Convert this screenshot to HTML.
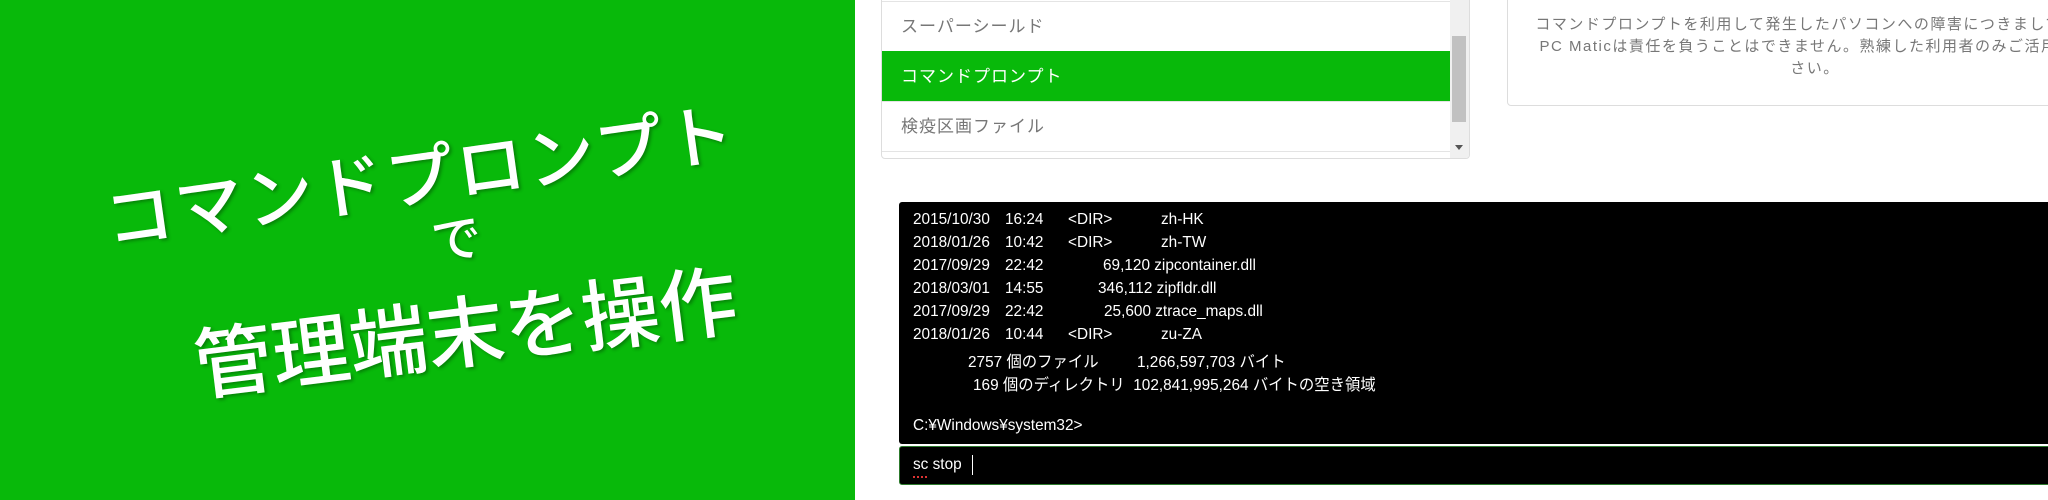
<!DOCTYPE html>
<html><head><meta charset="utf-8"><style>
*{margin:0;padding:0;box-sizing:border-box}
html,body{width:2048px;height:500px;overflow:hidden;background:#fff;position:relative;font-family:"Liberation Sans","Noto Sans CJK JP",sans-serif}
#green{position:absolute;left:0;top:0;width:855px;height:500px;background:#08b90a;overflow:hidden}
.t{position:absolute;color:#fff;font-family:"Noto Sans CJK JP",sans-serif;font-weight:500;white-space:nowrap;text-shadow:2px 2px 3px rgba(0,0,0,.3);transform:translate(-50%,-50%) rotate(-6deg);line-height:1}
#list{position:absolute;left:881px;top:-2px;width:589px;height:161px;border:1px solid #ddd;border-radius:0 0 4px 4px;overflow:hidden;background:#fff}
.row{position:absolute;left:0;width:570px;height:50px;border-top:1px solid #e4e4e4;font-size:17px;color:#777;padding-left:19px;line-height:50px;letter-spacing:1px}
#sb{position:absolute;right:0;top:0;width:19px;height:161px;background:#f0f0f0}
#thumb{position:absolute;left:2px;top:37px;width:14px;height:86px;background:#c1c1c1}
#note{position:absolute;left:1507px;top:-6px;width:600px;height:112px;border:1px solid #ddd;border-radius:4px;background:#fff}
.nl{position:absolute;left:1815px;transform:translateX(-50%);white-space:nowrap;font-size:15px;color:#777;letter-spacing:1.5px}
#term{position:absolute;left:899px;top:202px;width:1160px;height:242px;background:#000;border-radius:3px;overflow:hidden;color:#fff;font-size:16px}
.ln{position:absolute;left:0;height:23px;width:100%}
.ln span{position:absolute;top:0;transform:scaleX(.96);transform-origin:left;white-space:nowrap}
#prompt{position:absolute;left:899px;top:446px;width:1160px;height:39px;background:#000;border:1px solid #2d7a2d;border-radius:3px;color:#fff;font-size:16px}
</style></head><body>
<div id="green">
<div class="t" style="left:420px;top:172px;font-size:68px;letter-spacing:3px;transform:translate(-50%,-50%) rotate(-8deg)">コマンドプロンプト</div>
<div class="t" style="left:456px;top:236px;font-size:50px">で</div>
<div class="t" style="left:465px;top:328px;font-size:78px;letter-spacing:0px;transform:translate(-50%,-50%) rotate(-7deg)">管理端末を操作</div>
</div>

<div id="list">
<div class="row" style="top:2px">スーパーシールド</div>
<div class="row" style="top:52px;background:#08b90a;color:#fff;border-top-color:#08b90a">コマンドプロンプト</div>
<div class="row" style="top:102px">検疫区画ファイル</div>
<div class="row" style="top:152px"></div>
<div id="sb"><div id="thumb"></div><div style="position:absolute;left:5px;top:146px;width:0;height:0;border-left:4px solid transparent;border-right:4px solid transparent;border-top:5px solid #555"></div></div>
</div>

<div id="note"></div>
<div class="nl" style="top:13px">コマンドプロンプトを利用して発生したパソコンへの障害につきましては、</div>
<div class="nl" style="top:35px">PC Maticは責任を負うことはできません。熟練した利用者のみご活用くだ</div>
<div class="nl" style="top:57px">さい。</div>

<div id="term">
<div class="ln" style="top:-14px"><span style="left:14px">2018/01/26</span><span style="left:106px">10:42</span><span style="left:169px">&lt;DIR&gt;</span><span style="left:262px">zh-HANS</span></div>
<div class="ln" style="top:9px"><span style="left:14px">2015/10/30</span><span style="left:106px">16:24</span><span style="left:169px">&lt;DIR&gt;</span><span style="left:262px">zh-HK</span></div>
<div class="ln" style="top:32px"><span style="left:14px">2018/01/26</span><span style="left:106px">10:42</span><span style="left:169px">&lt;DIR&gt;</span><span style="left:262px">zh-TW</span></div>
<div class="ln" style="top:55px"><span style="left:14px">2017/09/29</span><span style="left:106px">22:42</span><span style="left:204px">69,120 zipcontainer.dll</span></div>
<div class="ln" style="top:78px"><span style="left:14px">2018/03/01</span><span style="left:106px">14:55</span><span style="left:199px">346,112 zipfldr.dll</span></div>
<div class="ln" style="top:101px"><span style="left:14px">2017/09/29</span><span style="left:106px">22:42</span><span style="left:205px">25,600 ztrace_maps.dll</span></div>
<div class="ln" style="top:124px"><span style="left:14px">2018/01/26</span><span style="left:106px">10:44</span><span style="left:169px">&lt;DIR&gt;</span><span style="left:262px">zu-ZA</span></div>
<div class="ln" style="top:146px"><span style="left:69px">2757 個のファイル</span><span style="left:238px">1,266,597,703 バイト</span></div>
<div class="ln" style="top:169px"><span style="left:74px">169 個のディレクトリ&nbsp; 102,841,995,264 バイトの空き領域</span></div>
<div class="ln" style="top:215px"><span style="left:14px">C:¥Windows¥system32&gt;</span></div>
</div>
<div id="prompt"><span style="position:absolute;left:13px;top:9px;transform:scaleX(.96);transform-origin:left">sc stop</span><span style="position:absolute;left:72px;top:8px;width:1px;height:20px;background:#fff"></span><span style="position:absolute;left:13px;top:29px;width:14px;height:2px;border-bottom:2px dotted #d33"></span></div>
</body></html>
